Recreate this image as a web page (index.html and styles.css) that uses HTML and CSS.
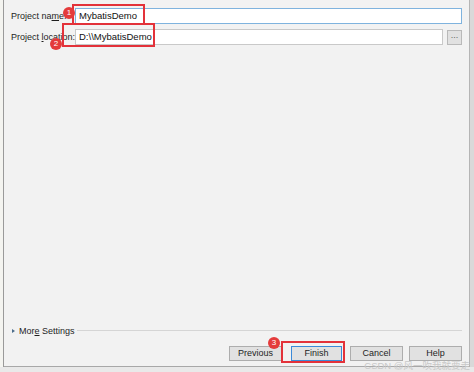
FILE: index.html
```html
<!DOCTYPE html>
<html lang="en">
<head>
    <meta charset="UTF-8">
    <title>New Project</title>
    <link rel="stylesheet" href="styles.css">
</head>
<body>
    <div class="screen">
        <div class="left-strip"></div>
        <div class="dialog">
            <div class="form">
                <div class="row">
                    <div class="label">Project na<u>m</u>e:</div>
                    <div class="field focused">MybatisDemo</div>
                </div>
                <div class="row">
                    <div class="label">Project <u>l</u>ocation:</div>
                    <div class="field">D:\\MybatisDemo</div>
                    <div class="browse">...</div>
                </div>
            </div>
            <div class="spacer"></div>
            <div class="more">
                <span class="arrow"></span>
                <span class="more-text">Mor<u>e</u> Settings</span>
                <span class="rule"></span>
            </div>
            <div class="buttons">
                <div class="btn">Previous</div>
                <div class="btn default">Finish</div>
                <div class="btn cancel">Cancel</div>
                <div class="btn">Help</div>
            </div>

            <div class="mark box1"></div>
            <div class="mark box2"></div>
            <div class="mark box3"></div>
            <div class="badge b1">1</div>
            <div class="badge b2">2</div>
            <div class="badge b3">3</div>
        </div>
        <div class="right-strip"></div>
    </div>
    <div class="watermark">CSDN @风一吹我就要走</div>
</body>
</html>
```

FILE: styles.css
```css
body {
    margin: 0;
    width: 474px;
    height: 372px;
    overflow: hidden;
    background-color: #e9e9e9;
    font-family: "Liberation Sans", "Noto Sans CJK SC", sans-serif;
    font-size: 9px;
    color: #1e1e1e;
    position: relative;
}
u {
    text-decoration: underline;
}
.screen {
    display: flex;
    height: 367px;
}
.left-strip {
    width: 3px;
    background-color: #f4f4f0;
    border-right: 1px solid #9a9a9a;
}
.right-strip {
    flex: 1;
    background-color: #d9d9d9;
}
.dialog {
    position: relative;
    width: 466px;
    background-color: #f2f2f2;
    border-right: 1px solid #b5b5b5;
    border-bottom: 1px solid #a8a8a8;
    box-sizing: border-box;
    padding: 8px 7px 5px 7px;
    display: flex;
    flex-direction: column;
}
.form {
    display: flex;
    flex-direction: column;
    gap: 5px;
}
.row {
    display: flex;
    align-items: center;
    height: 16px;
}
.label {
    width: 64px;
    flex-shrink: 0;
    white-space: nowrap;
}
.field {
    flex: 1;
    height: 100%;
    box-sizing: border-box;
    background-color: #fff;
    border: 1px solid #c9c9c9;
    padding-left: 3px;
    font-size: 9.5px;
    line-height: 14px;
    color: #111;
}
.field.focused {
    border-color: #7fb3de;
}
.browse {
    width: 15px;
    height: 15px;
    margin-left: 4px;
    box-sizing: border-box;
    background-color: #e1e1e1;
    border: 1px solid #b9b9b9;
    text-align: center;
    line-height: 9px;
    color: #666;
}
.spacer {
    flex: 1;
}
.more {
    display: flex;
    align-items: center;
    height: 10px;
    padding-left: 1px;
}
.arrow {
    width: 0;
    height: 0;
    border-left: 3px solid #4d6e8c;
    border-top: 2px solid transparent;
    border-bottom: 2px solid transparent;
    margin-right: 4px;
}
.more-text {
    white-space: nowrap;
    margin-right: 2px;
}
.rule {
    flex: 1;
    height: 1px;
    background-color: #d5d5d5;
    margin-top: -1px;
}
.buttons {
    display: flex;
    justify-content: flex-end;
    gap: 6px;
    margin-top: 10px;
}
.btn {
    width: 53px;
    height: 15px;
    box-sizing: border-box;
    background-color: #e1e1e1;
    border: 1px solid #adadad;
    text-align: center;
    line-height: 13px;
}
.btn.default {
    border-color: #3c8ad8;
    width: 51px;
    margin-left: 3px;
}
.btn.cancel {
    margin-left: 2px;
}
.mark {
    position: absolute;
    border: 2px solid #e3323a;
    box-sizing: border-box;
}
.box1 {
    left: 68px;
    top: 4px;
    width: 73px;
    height: 21px;
}
.box2 {
    left: 58px;
    top: 23px;
    width: 93px;
    height: 24px;
}
.box3 {
    left: 277px;
    top: 341px;
    width: 64px;
    height: 22px;
}
.badge {
    position: absolute;
    width: 12px;
    height: 12px;
    border-radius: 50%;
    background-color: #e43b3b;
    color: #fff;
    font-size: 8px;
    line-height: 12px;
    text-align: center;
}
.b1 {
    left: 59px;
    top: 7px;
}
.b2 {
    left: 46px;
    top: 38px;
}
.b3 {
    left: 264px;
    top: 337px;
}
.watermark {
    position: absolute;
    right: 4px;
    bottom: 0;
    font-size: 9.5px;
    color: #c8c8c8;
    white-space: nowrap;
}
```
